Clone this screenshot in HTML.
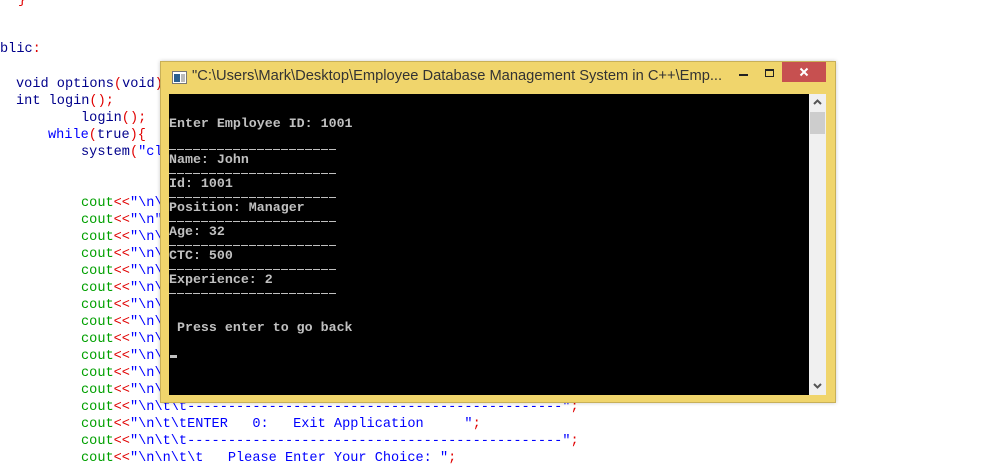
<!DOCTYPE html>
<html><head><style>
body{margin:0;width:1006px;height:459px;overflow:hidden;background:#fff;position:relative;font-family:"Liberation Mono",monospace}
.c{position:absolute;font-size:13.6px;white-space:pre;line-height:17px;color:#00008b}
.k{color:#00008b}.r{color:#e00000}.g{color:#00a000}.b{color:#0000ff}
#win{position:absolute;left:160px;top:61px;width:674px;height:340px;background:#f0d56c;border:1px solid #c8b058;box-shadow:0 0 4px rgba(0,0,0,.2)}
#title{position:absolute;left:31px;top:6px;font-family:"Liberation Sans",sans-serif;font-size:14.7px;color:#333;white-space:pre}
#con{position:absolute;left:8px;top:32px;width:640px;height:301px;background:#000}
#sb{position:absolute;left:648px;top:32px;width:17px;height:301px;background:#f0f0f0}
.t{position:absolute;left:0;font-size:13.3px;color:#c0c0c0;white-space:pre;font-weight:bold}
.d{position:absolute;left:0;width:168px;height:1px;background:repeating-linear-gradient(90deg,#c0c0c0 0 7px,transparent 7px 8px)}
</style></head><body>
<div class="c r" style="left:18px;top:-8px">}</div>
<div class="c" style="left:0;top:41px"><span class="k">blic</span><span class="r">:</span></div>
<div class="c" style="left:16px;top:76px">void options<span class="r">(</span>void<span class="r">)</span></div>
<div class="c" style="left:16px;top:93px">int login<span class="r">();</span></div>
<div class="c" style="left:81px;top:110px">login<span class="r">();</span></div>
<div class="c" style="left:48px;top:127px"><span class="b">while</span><span class="r">(</span>true<span class="r">){</span></div>
<div class="c" style="left:81px;top:144px">system<span class="r">(</span><span class="b">"cl</span></div>
<div class="c" style="left:81px;top:195px;line-height:17px"><span class="g">cout</span><span class="r">&lt;&lt;</span><span class="b">"\n\</span>
<span class="g">cout</span><span class="r">&lt;&lt;</span><span class="b">"\n"</span>
<span class="g">cout</span><span class="r">&lt;&lt;</span><span class="b">"\n\</span>
<span class="g">cout</span><span class="r">&lt;&lt;</span><span class="b">"\n\</span>
<span class="g">cout</span><span class="r">&lt;&lt;</span><span class="b">"\n\</span>
<span class="g">cout</span><span class="r">&lt;&lt;</span><span class="b">"\n\</span>
<span class="g">cout</span><span class="r">&lt;&lt;</span><span class="b">"\n\</span>
<span class="g">cout</span><span class="r">&lt;&lt;</span><span class="b">"\n\</span>
<span class="g">cout</span><span class="r">&lt;&lt;</span><span class="b">"\n\</span>
<span class="g">cout</span><span class="r">&lt;&lt;</span><span class="b">"\n\</span>
<span class="g">cout</span><span class="r">&lt;&lt;</span><span class="b">"\n\</span>
<span class="g">cout</span><span class="r">&lt;&lt;</span><span class="b">"\n\</span>
<span class="g">cout</span><span class="r">&lt;&lt;</span><span class="b">"\n\t\t----------------------------------------------"</span><span class="r">;</span>
<span class="g">cout</span><span class="r">&lt;&lt;</span><span class="b">"\n\t\tENTER   0:   Exit Application     "</span><span class="r">;</span>
<span class="g">cout</span><span class="r">&lt;&lt;</span><span class="b">"\n\t\t----------------------------------------------"</span><span class="r">;</span>
<span class="g">cout</span><span class="r">&lt;&lt;</span><span class="b">"\n\n\t\t   Please Enter Your Choice: "</span><span class="r">;</span></div>
<div id="win">
 <svg style="position:absolute;left:11px;top:9px" width="15" height="13"><rect x=".5" y=".5" width="14" height="12" fill="#fff" stroke="#777"/><rect x="2" y="3" width="6" height="8" fill="#2a5f8f"/><rect x="9" y="3" width="4" height="8" fill="#bbb"/></svg>
 <div id="title">"C:\Users\Mark\Desktop\Employee Database Management System in C++\Emp...</div>
 <div style="position:absolute;left:578px;top:12px;width:9px;height:2px;background:#222"></div>
 <div style="position:absolute;left:604px;top:7px;width:7px;height:5px;border:1px solid #222;border-top-width:2px"></div>
 <div style="position:absolute;left:621px;top:0;width:44px;height:20px;background:#c75050"><svg width="44" height="20"><path d="M18.5 6.5L25.5 13.5M25.5 6.5L18.5 13.5" stroke="#fff" stroke-width="2"/></svg></div>
 <div id="con">
  <div class="t" style="top:22px">Enter Employee ID: 1001</div>
  <div class="d" style="top:55px"></div>
  <div class="t" style="top:58px">Name: John</div>
  <div class="d" style="top:79px"></div>
  <div class="t" style="top:82px">Id: 1001</div>
  <div class="d" style="top:103px"></div>
  <div class="t" style="top:106px">Position: Manager</div>
  <div class="d" style="top:127px"></div>
  <div class="t" style="top:130px">Age: 32</div>
  <div class="d" style="top:151px"></div>
  <div class="t" style="top:154px">CTC: 500</div>
  <div class="d" style="top:175px"></div>
  <div class="t" style="top:178px">Experience: 2</div>
  <div class="d" style="top:199px"></div>
  <div class="t" style="top:226px"> Press enter to go back</div>
  <div style="position:absolute;left:1px;top:261px;width:7px;height:3px;background:#c0c0c0"></div>
 </div>
 <div id="sb">
  <svg style="position:absolute;left:4px;top:5px" width="9" height="6"><path d="M1 5L4.5 1.5L8 5" stroke="#555" stroke-width="2" fill="none"/></svg>
  <div style="position:absolute;left:1px;top:18px;width:15px;height:22px;background:#cdcdcd"></div>
  <svg style="position:absolute;left:4px;top:289px" width="9" height="6"><path d="M1 1L4.5 4.5L8 1" stroke="#555" stroke-width="2" fill="none"/></svg>
 </div>
</div>
</body></html>
